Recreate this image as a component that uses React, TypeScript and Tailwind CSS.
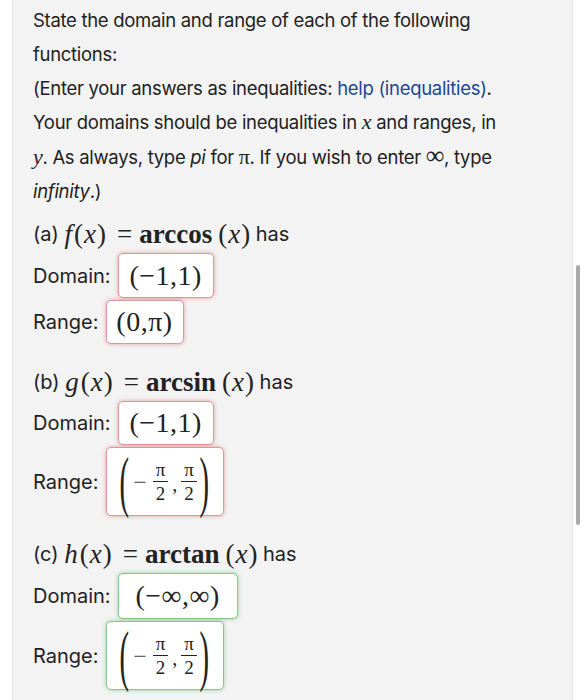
import type { ReactNode } from 'react'

const math = "font-['Liberation_Serif',serif]"

function Paren({ children }: { children: ReactNode }) {
  return <span className={`${math} text-[28px] leading-none tracking-[0.5px]`}>{children}</span>
}

function Frac() {
  return (
    <span className={`${math} inline-flex flex-col items-center text-[19px] leading-[19px]`}>
      <span className="px-[3px] pb-[2px]">π</span>
      <span className="w-full text-center border-t border-[#222] pt-[2px]">2</span>
    </span>
  )
}

function TallParen({ children }: { children: ReactNode }) {
  return (
    <span className={`${math} inline-block text-[44px] leading-none scale-y-[1.55] scale-x-[0.65] font-light text-[#222]`}>
      {children}
    </span>
  )
}

function HalfPi() {
  return (
    <span className="flex items-center">
      <TallParen>(</TallParen>
      <span className={`${math} text-[24px] ml-[1px] mr-[6px] text-[#444]`}>−</span>
      <Frac />
      <span className={`${math} text-[20px] self-center mt-[4px] mx-[4px]`}>,</span>
      <Frac />
      <TallParen>)</TallParen>
    </span>
  )
}

function AnswerBox({ children, ok, className }: { children: ReactNode; ok?: boolean; className: string }) {
  return (
    <div
      className={`flex items-center justify-center bg-white rounded-[5px] border ${
        ok
          ? 'border-[#8cc48c] shadow-[0_0_4px_rgba(60,160,60,0.45)]'
          : 'border-[#d99a9a] shadow-[0_0_4px_rgba(210,60,60,0.45)]'
      } ${className}`}
    >
      {children}
    </div>
  )
}

function Heading({ label, fn, name }: { label: string; fn: string; name: string }) {
  return (
    <div className="h-[34px] flex items-center">
      <span>({label})&nbsp;</span>
      <span className={`${math} text-[27px] flex items-center`}>
        <i className="mr-[2px]">{fn}</i>
        <span>(</span>
        <i className="px-[1px]">x</i>
        <span>)</span>
        <span className="ml-[11px] mr-[7px]">=</span>
        <span className="font-semibold">{name}</span>
        <span className="ml-[6px]">(</span>
        <i className="px-[1px]">x</i>
        <span>)</span>
      </span>
      <span>&nbsp;has</span>
    </div>
  )
}

function Row({ label, children }: { label: string; children: ReactNode }) {
  return (
    <div className="flex items-center gap-[7px]">
      <span>{label}</span>
      {children}
    </div>
  )
}

export default function App() {
  return (
    <div className="relative w-[585px] h-[700px] overflow-hidden bg-white font-['Inter','Liberation_Sans',sans-serif] text-[20px] text-[#222]">
      <div className="ml-[12px] w-[561px] h-[720px] bg-[#f3f3f4] border-x border-[#e2e2e4] pl-[20px] pr-[16px] pt-[3px]">
        <div className="leading-[34px] pr-[60px] text-[18.5px] tracking-[-0.3px]">
          <p>State the domain and range of each of the following functions:</p>
          <p>
            (Enter your answers as inequalities: <span className="text-[#1d4795]">help (inequalities)</span>.
            Your domains should be inequalities in <i className={`${math} text-[22px]`}>x</i> and ranges, in{' '}
            <i className={`${math} text-[22px]`}>y</i>. As always, type <i>pi</i> for{' '}
            <span className={`${math} text-[22px]`}>π</span>. If you wish to enter{' '}
            <span className={`${math} text-[26px]`}>∞</span>, type <i>infinity</i>.)
          </p>
        </div>

        <div className="mt-[9px] flex flex-col gap-[2px]">
          <Heading label="a" fn="f" name="arccos" />
          <Row label="Domain:">
            <AnswerBox className="w-[96px] h-[45px]">
              <Paren>(−1,1)</Paren>
            </AnswerBox>
          </Row>
          <Row label="Range:">
            <AnswerBox className="w-[78px] h-[44px]">
              <Paren>(0,π)</Paren>
            </AnswerBox>
          </Row>
        </div>

        <div className="mt-[21px] flex flex-col gap-[2px]">
          <Heading label="b" fn="g" name="arcsin" />
          <Row label="Domain:">
            <AnswerBox className="w-[96px] h-[44px]">
              <Paren>(−1,1)</Paren>
            </AnswerBox>
          </Row>
          <Row label="Range:">
            <AnswerBox className="w-[118px] h-[69px]">
              <HalfPi />
            </AnswerBox>
          </Row>
        </div>

        <div className="mt-[21px] flex flex-col gap-[2px]">
          <Heading label="c" fn="h" name="arctan" />
          <Row label="Domain:">
            <AnswerBox ok className="w-[120px] h-[46px]">
              <Paren>(−∞,∞)</Paren>
            </AnswerBox>
          </Row>
          <Row label="Range:">
            <AnswerBox ok className="w-[118px] h-[69px]">
              <HalfPi />
            </AnswerBox>
          </Row>
        </div>
      </div>
      <div className="absolute left-[576px] top-[265px] w-[4px] h-[260px] rounded-full bg-[#a9a9a9]" />
    </div>
  )
}
